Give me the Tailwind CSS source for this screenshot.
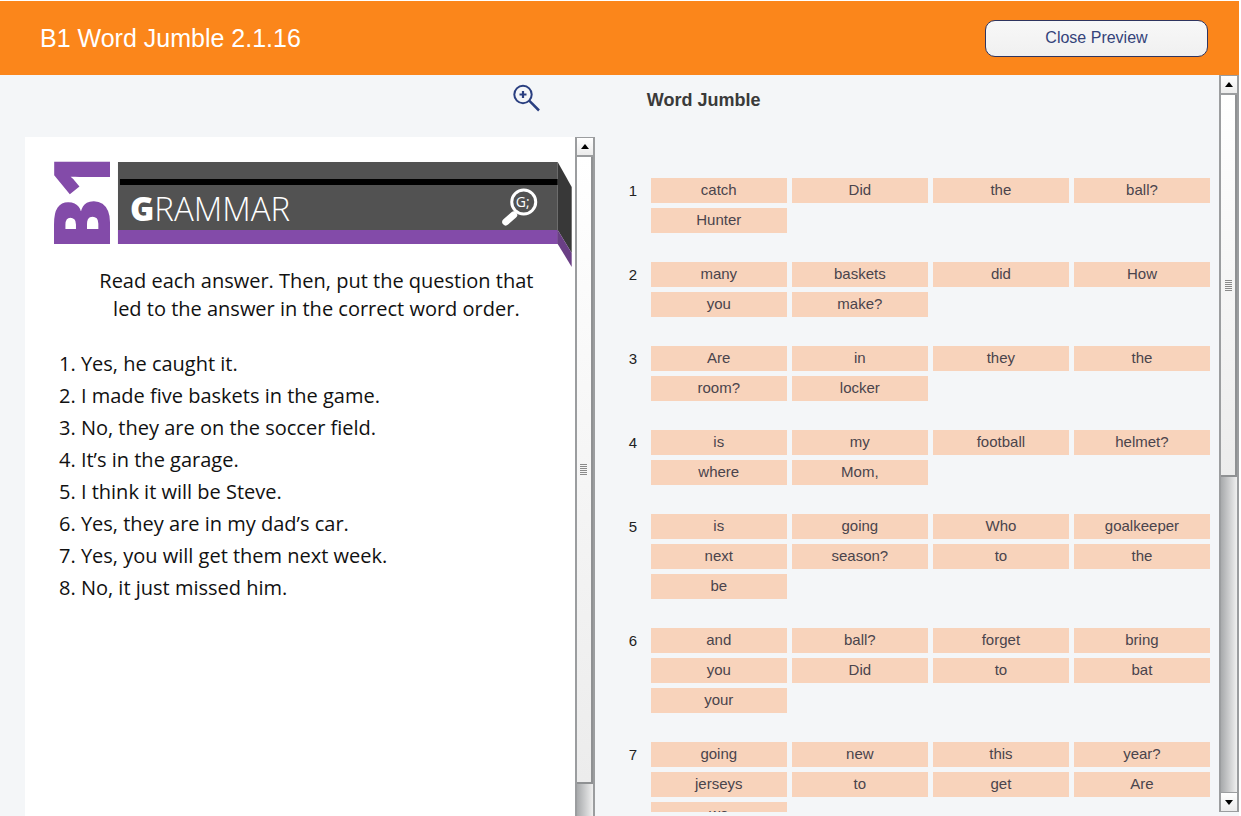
<!DOCTYPE html>
<html lang="en">
<head>
  <meta charset="UTF-8" />
  <meta name="viewport" content="width=device-width, initial-scale=1.0"/>
  <title>B1 Word Jumble 2.1.16</title>
  <script src="https://cdn.jsdelivr.net/npm/@tailwindcss/browser@4"></script>
</head>

<body class="h-screen flex flex-col overflow-hidden bg-white pt-px pr-[2px] font-['Liberation_Sans',Arial,sans-serif]">

<!-- Header -->
<header class="flex items-center justify-between bg-[#fb861b] h-[74px] shrink-0 pl-10 pr-[31px]">
  <h1 class="text-[25px] leading-[30px] text-white">B1 Word Jumble 2.1.16</h1>
  <button type="button" class="w-[223px] h-[37px] rounded-[10px] border border-[#2f3560] bg-linear-to-b from-[#f8f8f8] to-[#f0f0f0] text-[16px] leading-5 text-[#34437a]">Close Preview</button>
</header>

<main class="flex flex-1 min-h-0 bg-[#f4f6f8]">

  <!-- Worksheet -->
  <section class="w-[48%] shrink-0 flex flex-col pl-[25px]">
    <div class="flex justify-end items-start h-[62px] shrink-0 pt-2 pr-[54px]">
      <button type="button" aria-label="Zoom in" class="w-[29px] h-[29px]">
        <svg viewBox="0 0 29 29" class="w-full h-full" fill="none" stroke="#2a3f80" stroke-width="2">
          <circle cx="11" cy="11.500" r="8.700"/>
          <path d="M11 8v7M7.500 11.500h7" stroke-width="2.200"/>
          <path d="M17.200 17.700L27 27.500" stroke-width="2.500"/>
        </svg>
      </button>
    </div>

    <div class="flex flex-1 min-h-0">
      <article class="flex-1 min-w-0 bg-white pt-6 pl-7 pr-[3px] font-['Open_Sans','Noto_Sans',sans-serif] text-[20px] text-[#111]">
        <svg viewBox="0 0 519 106" class="w-full block overflow-visible" role="img" aria-label="B1 Grammar">
          <text transform="translate(57 89) rotate(-90)" font-size="78" font-weight="800" fill="#834ba9">B1</text>
          <path d="M65 1h440v82H65z" fill="#525252"/>
          <path d="M67 18h438v6H67z" fill="#000"/>
          <path d="M65 69h440v14H65z" fill="#834ba9"/>
          <path d="M505 1l14 25v66l-14-23z" fill="#383838"/>
          <path d="M505 69l14 23v14l-14-23z" fill="#6a3f85"/>
          <text x="77" y="60" font-size="33" fill="#fff"><tspan font-weight="800">G</tspan><tspan font-weight="300">RAMMAR</tspan></text>
          <path d="M461 54l-8 7" stroke="#fff" stroke-width="7" stroke-linecap="round"/>
          <circle cx="471" cy="41" r="12" fill="none" stroke="#fff" stroke-width="3"/>
          <text x="463" y="46" font-size="14" fill="#fff">G;</text>
        </svg>
        <p class="pl-10 pr-8 text-center leading-7">Read each answer. Then, put the question that led to the answer in the correct word order.</p>
        <ol class="list-decimal list-inside pl-[6px] mt-[25px] leading-8">
          <li>Yes, he caught it.</li>
          <li>I made five baskets in the game.</li>
          <li>No, they are on the soccer field.</li>
          <li>It’s in the garage.</li>
          <li>I think it will be Steve.</li>
          <li>Yes, they are in my dad’s car.</li>
          <li>Yes, you will get them next week.</li>
          <li>No, it just missed him.</li>
        </ol>
      </article>

      <!-- Worksheet scrollbar -->
      <div class="w-5 shrink-0 flex flex-col border-l-2 border-r-2 border-[#9b9d9f] bg-linear-to-r from-[#a8aaac] to-[#f0f0f0]">
        <button type="button" aria-label="Scroll up" class="h-5 shrink-0 flex items-center justify-center border-y border-b-2 border-[#9b9d9f] bg-linear-to-b from-white to-[#ececec]">
          <svg viewBox="0 0 8 5" class="w-2 h-[5px]"><path d="M4 0l4 5H0z" fill="#000"/></svg>
        </button>
        <div class="h-[627px] flex flex-col items-center justify-center gap-px border-r-2 border-b-2 border-[#8f9193] bg-linear-to-b from-white to-[#ececec]">
          <span class="w-[7px] h-px bg-[#8a8a8a]"></span>
          <span class="w-[7px] h-px bg-[#8a8a8a]"></span>
          <span class="w-[7px] h-px bg-[#8a8a8a]"></span>
          <span class="w-[7px] h-px bg-[#8a8a8a]"></span>
          <span class="w-[7px] h-px bg-[#8a8a8a]"></span>
          <span class="w-[7px] h-px bg-[#8a8a8a]"></span>
        </div>
      </div>
    </div>
  </section>

  <!-- Exercise -->
  <section class="flex-1 min-w-0 flex mb-1">
    <div class="flex-1 min-w-0 overflow-hidden pl-[34px] pr-[9px]">
      <h2 class="pl-[18px] pt-[14px] text-[18px] leading-[22px] font-bold text-[#3a3a3a]">Word Jumble</h2>
      <div id="questions" class="flex flex-col gap-[29px] mt-[67px]"></div>
    </div>

    <!-- Exercise scrollbar -->
    <div class="w-5 shrink-0 flex flex-col border-l-2 border-r-2 border-[#9b9d9f] bg-linear-to-r from-[#a8aaac] to-[#f0f0f0]">
      <button type="button" aria-label="Scroll up" class="h-5 shrink-0 flex items-center justify-center border-y border-b-2 border-[#9b9d9f] bg-linear-to-b from-white to-[#ececec]">
        <svg viewBox="0 0 8 5" class="w-2 h-[5px]"><path d="M4 0l4 5H0z" fill="#000"/></svg>
      </button>
      <div class="h-[382px] flex flex-col items-center justify-center gap-px border-r-2 border-b-2 border-[#8f9193] bg-linear-to-b from-white to-[#ececec]">
        <span class="w-[7px] h-px bg-[#8a8a8a]"></span>
        <span class="w-[7px] h-px bg-[#8a8a8a]"></span>
        <span class="w-[7px] h-px bg-[#8a8a8a]"></span>
        <span class="w-[7px] h-px bg-[#8a8a8a]"></span>
        <span class="w-[7px] h-px bg-[#8a8a8a]"></span>
        <span class="w-[7px] h-px bg-[#8a8a8a]"></span>
      </div>
      <button type="button" aria-label="Scroll down" class="mt-auto h-5 shrink-0 flex items-center justify-center border-y border-[#9b9d9f] bg-linear-to-b from-white to-[#ececec]">
        <svg viewBox="0 0 8 5" class="w-2 h-[5px]"><path d="M0 0h8L4 5z" fill="#000"/></svg>
      </button>
    </div>
  </section>
</main>

<script>
const questions = [
  ['catch', 'Did', 'the', 'ball?', 'Hunter'],
  ['many', 'baskets', 'did', 'How', 'you', 'make?'],
  ['Are', 'in', 'they', 'the', 'room?', 'locker'],
  ['is', 'my', 'football', 'helmet?', 'where', 'Mom,'],
  ['is', 'going', 'Who', 'goalkeeper', 'next', 'season?', 'to', 'the', 'be'],
  ['and', 'ball?', 'forget', 'bring', 'you', 'Did', 'to', 'bat', 'your'],
  ['going', 'new', 'this', 'year?', 'jerseys', 'to', 'get', 'Are', 'we'],
];

const container = document.getElementById('questions');
questions.forEach((words, i) => {
  const row = document.createElement('div');
  row.className = 'flex';
  row.innerHTML = `
    <span class="w-[22px] shrink-0 pt-[3px] text-[15px] leading-5 text-[#222]">${i + 1}</span>
    <div class="flex-1 grid grid-cols-4 gap-[5px]">
      ${words.map(word => `<button type="button" class="h-[25px] pb-px bg-[#f8d3bb] text-[15px] leading-5 text-[#4a444c]">${word}</button>`).join('')}
    </div>`;
  container.appendChild(row);
});
</script>

</body>
</html>
